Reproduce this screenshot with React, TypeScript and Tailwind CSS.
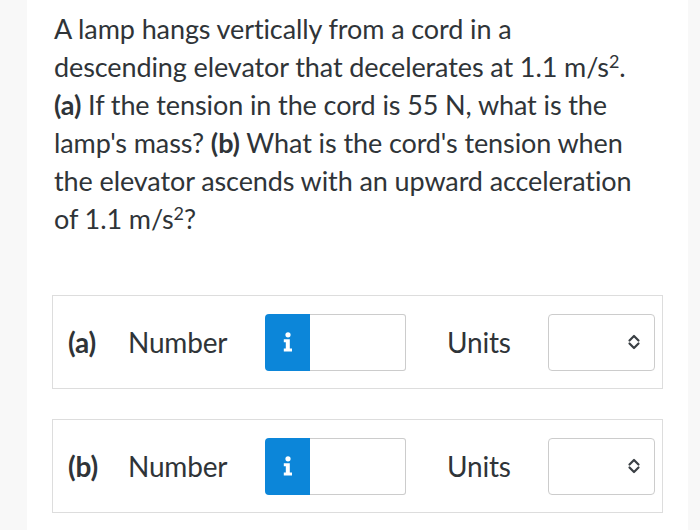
import React from 'react'

const FONT = { fontFamily: 'Lato, "Open Sans", sans-serif' }

function Chevrons() {
  return (
    <svg width="14" height="18" viewBox="0 0 14 18" fill="none" stroke="#3a3f44" strokeWidth="2.2" strokeLinecap="round" strokeLinejoin="round">
      <path d="M2.5 7.5 L7 3 L11.5 7.5" />
      <path d="M2.5 10.5 L7 15 L11.5 10.5" />
    </svg>
  )
}

function InfoGlyph() {
  return (
    <svg width="10" height="20" viewBox="0 0 10 20" fill="#ffffff">
      <circle cx="5" cy="2.8" r="2.6" />
      <path d="M0.8 7.2 H6.8 V16.6 H9 V19.6 H0.8 V16.6 H2.8 V10.2 H0.8 Z" />
    </svg>
  )
}

function AnswerRow({ label }: { label: string }) {
  return (
    <div className="flex h-[94px] items-center border border-[#dddddd] bg-white pl-[15px] text-[28px] tracking-[-0.2px] text-[#2f3438]">
      <span className="w-[60px] font-bold">{label}</span>
      <span className="w-[137px]">Number</span>
      <div className="flex h-[57px] w-[141px]">
        <div className="flex w-[45px] items-center justify-center rounded-l-[4px] bg-[#0c86d9]">
          <InfoGlyph />
        </div>
        <div className="flex-1 rounded-r-[3px] border border-l-0 border-[#cccccc] bg-white" />
      </div>
      <span className="ml-[41px] w-[101px]">Units</span>
      <div className="flex h-[57px] w-[107px] items-center justify-end rounded-[4px] border border-[#cccccc] bg-white pr-[13px]">
        <Chevrons />
      </div>
    </div>
  )
}

export default function App() {
  return (
    <div className="flex h-[530px] w-full bg-[#f8f8f8]" style={FONT}>
      <div className="ml-[27px] w-[661px] bg-white px-[25px] pt-[10px]">
        <p className="whitespace-nowrap pl-[2px] text-[27px] leading-[38px] tracking-[-0.1px] text-[#2f3438]">
          A lamp hangs vertically from a cord in a<br />
          descending elevator that decelerates at 1.1 m/s<sup className="text-[18px]">2</sup>.<br />
          <b>(a)</b> If the tension in the cord is 55 N, what is the<br />
          lamp's mass? <b>(b)</b> What is the cord's tension when<br />
          the elevator ascends with an upward acceleration<br />
          of 1.1 m/s<sup className="text-[18px]">2</sup>?
        </p>
        <div className="mt-[57px] flex flex-col gap-[30px]">
          <AnswerRow label="(a)" />
          <AnswerRow label="(b)" />
        </div>
      </div>
    </div>
  )
}
